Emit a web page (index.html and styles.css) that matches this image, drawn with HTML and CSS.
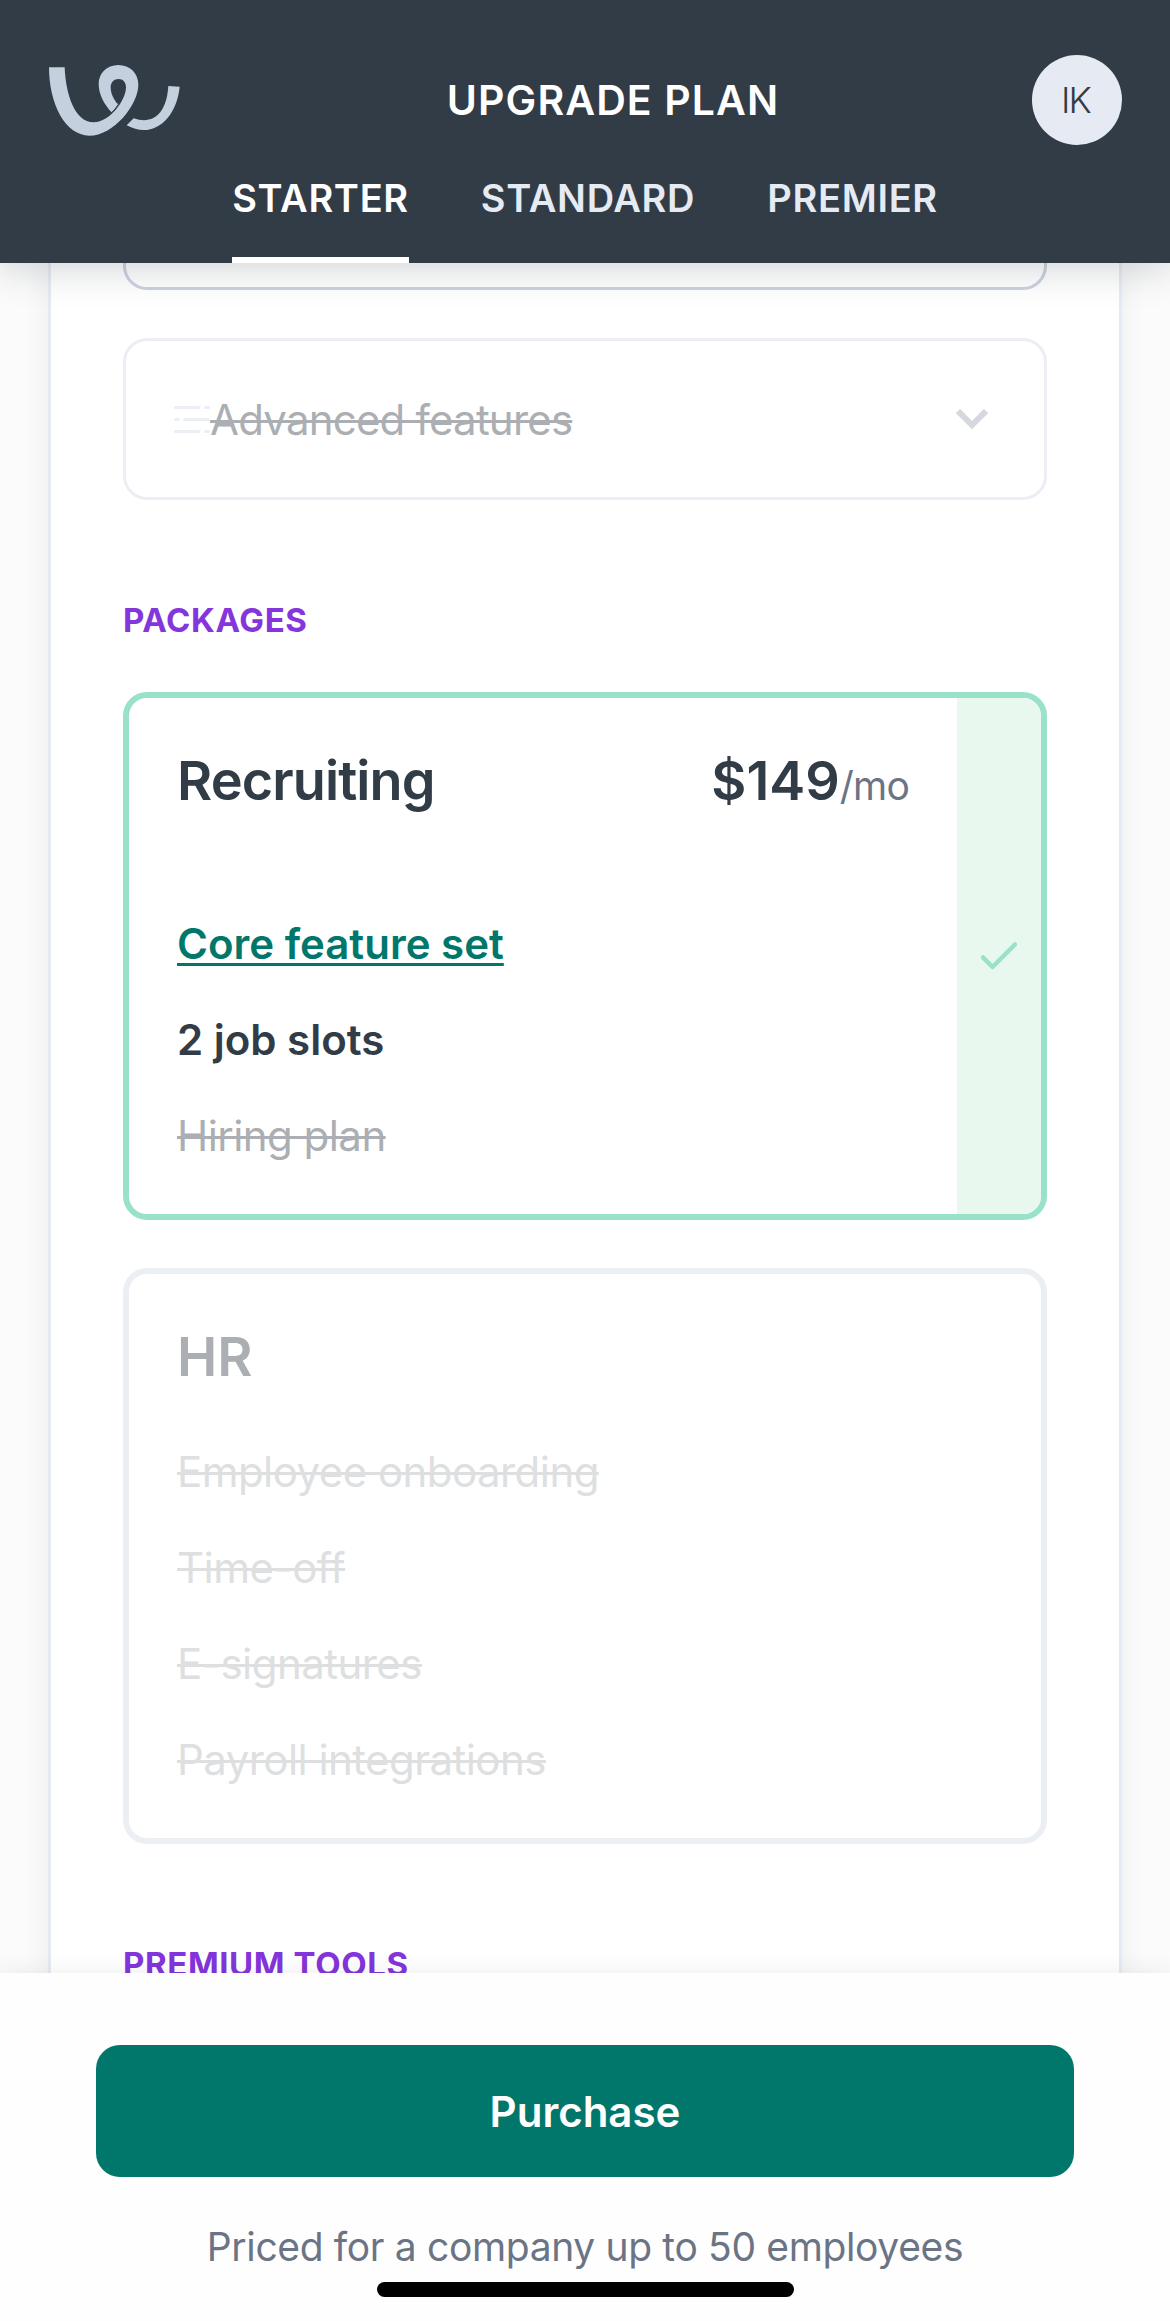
FILE: index.html
```html
<!DOCTYPE html>
<html lang="en">
<head>
    <meta charset="UTF-8">
    <meta name="viewport" content="width=device-width, initial-scale=1.0">
    <title>Upgrade Plan</title>
    <link rel="stylesheet" href="styles.css">
</head>
<body>
    <header class="header">
        <div class="header-bar">
            <svg class="logo" viewBox="54 45 438 213">
                <path class="logo-fill" d="M57 52 L104 52 C107 130 133 217 191 217 C240 217 288 150 288 112 C288 97 279 87 266 87 C252 87 242 97 242 112 C242 130 250 145 262 162 L245 187 C224 165 206 135 206 102 C206 70 230 45 265 45 C300 45 325 70 325 104 C325 165 250 257 178 257 C105 257 57 160 57 52 Z"/>
                <path class="logo-fill" d="M290 226 L311 205 C370 225 410 190 415 108 L449 110 C440 205 370 270 290 226 Z"/>
                <path class="logo-fill" d="M236 176 L262 160 L266 164 L246 187 Z"/>
                <path class="logo-seam" d="M244 189 Q256 178 266 162"/>
            </svg>
            <h1 class="title">UPGRADE PLAN</h1>
            <div class="avatar">IK</div>
        </div>
        <nav class="tabs">
            <a class="tab active">STARTER</a>
            <a class="tab">STANDARD</a>
            <a class="tab">PREMIER</a>
        </nav>
    </header>

    <main class="content">
        <div class="panel">
            <div class="accordion accordion-end"></div>
            <div class="accordion disabled">
                <svg class="list-icon" viewBox="0 0 36 27">
                    <path d="M1.5 1.5H25M31.5 1.5h3M1.5 13.5h3M10.5 13.5H34.5M1.5 25.5H25M31.5 25.5h3"/>
                </svg>
                <span class="accordion-label">Advanced features</span>
                <svg class="chevron" viewBox="0 0 32 20">
                    <path d="M2 2 L16 16 L30 2"/>
                </svg>
            </div>

            <h2 class="section-title">PACKAGES</h2>

            <div class="package selected">
                <div class="package-body">
                    <div class="package-head">
                        <h3 class="package-name">Recruiting</h3>
                        <div class="cost"><span class="price">$149</span><span class="per">/mo</span></div>
                    </div>
                    <ul class="features">
                        <li><a class="link">Core feature set</a></li>
                        <li class="included">2 job slots</li>
                        <li><s>Hiring plan</s></li>
                    </ul>
                </div>
                <div class="package-check">
                    <svg class="check" viewBox="0 0 36 28">
                        <path d="M2 15.5 L11.5 25 L34 2.5"/>
                    </svg>
                </div>
            </div>

            <div class="package disabled">
                <div class="package-body">
                    <div class="package-head">
                        <h3 class="package-name">HR</h3>
                    </div>
                    <ul class="features">
                        <li><s>Employee onboarding</s></li>
                        <li><s>Time-off</s></li>
                        <li><s>E-signatures</s></li>
                        <li><s>Payroll integrations</s></li>
                    </ul>
                </div>
            </div>

            <h2 class="section-title">PREMIUM TOOLS</h2>
        </div>
    </main>

    <footer class="footer">
        <button class="purchase">Purchase</button>
        <p class="note">Priced for a company up to 50 employees</p>
        <div class="home-indicator"></div>
    </footer>
</body>
</html>
```
FILE: styles.css
```css
* { box-sizing: border-box; }
body {
    display: flex;
    flex-direction: column;
    height: 2321px;
    margin: 0;
    overflow: hidden;
    background: #fbfbfb;
    color: #323c47;
    font-family: Inter, "Liberation Sans", sans-serif;
    font-size: 42px;
}
h1, h2, h3, p, ul { margin: 0; padding: 0; }

/* Header */
.header {
    position: relative;
    z-index: 1;
    flex: none;
    height: 263px;
    padding-top: 55px;
    background: #323c47;
    box-shadow: 0 6px 36px rgba(50, 60, 71, 0.22);
}
.header-bar {
    display: flex;
    align-items: center;
    justify-content: space-between;
    height: 90px;
    padding: 0 48px;
}
.logo { width: 146px; height: 71px; }
.logo-fill { fill: #c5d0df; }
.logo-seam { fill: none; stroke: #323c47; stroke-width: 3; }
.title {
    color: #fff;
    font-size: 41px;
    font-weight: 600;
    letter-spacing: 1.1px;
}
.avatar {
    width: 90px;
    height: 90px;
    border-radius: 50%;
    background: #e6ebf3;
    font-size: 36px;
    font-weight: 300;
    line-height: 90px;
    letter-spacing: -2px;
    text-align: center;
    text-indent: -3px;
}
.tabs {
    display: flex;
    justify-content: center;
    gap: 72px;
}
.tab {
    padding: 23px 0 29px;
    border-bottom: 6px solid transparent;
    color: #e6ebf3;
    font-size: 38px;
    font-weight: 600;
    line-height: 60px;
    letter-spacing: 0.7px;
}
.tab.active { border-color: #fff; color: #fff; }

/* Plan details */
.content {
    flex: 1;
    min-height: 0;
    padding: 0 48px;
    overflow: hidden;
}
.panel {
    height: 1800px;
    padding: 0 72px;
    border: solid #e6ebf3;
    border-width: 0 3px;
    background: #fff;
    box-shadow: 0 0 24px rgba(50, 60, 71, 0.08);
}
.accordion {
    display: flex;
    align-items: center;
    height: 162px;
    padding: 0 56px 0 48px;
    border: 3px solid #cbd3e0;
    border-radius: 24px;
}
.accordion-end {
    height: 27px;
    margin-bottom: 48px;
    border-top: 0;
    border-radius: 0 0 24px 24px;
}
.accordion.disabled { border-color: #ebeff5; }
.list-icon { width: 36px; height: 27px; }
.list-icon path { fill: none; stroke: #ebeff5; stroke-width: 3; stroke-linecap: round; }
.accordion-label {
    flex: 1;
    color: #abafb4;
    letter-spacing: -0.8px;
    text-decoration: line-through 3px;
}
.chevron { width: 32px; height: 20px; }
.chevron path { fill: none; stroke: #d5d8df; stroke-width: 6; }
.section-title {
    margin: 96px 0 48px;
    color: #8435db;
    font-size: 33px;
    font-weight: 700;
    line-height: 48px;
    letter-spacing: 0.6px;
}

/* Packages */
.package {
    display: flex;
    border: 6px solid #9ae1ca;
    border-radius: 24px;
    overflow: hidden;
}
.package + .package { margin-top: 48px; }
.package.disabled { border-color: #ebeff4; }
.package-body { flex: 1; padding: 42px 48px 48px; }
.package-head {
    display: flex;
    justify-content: space-between;
    height: 81px;
    margin-bottom: 93px;
    line-height: 81px;
}
.package-name, .price { font-size: 54px; font-weight: 600; }
.package-name { letter-spacing: -0.9px; }
.cost { display: flex; align-items: baseline; }
.per { color: #6b7484; font-size: 39px; letter-spacing: -0.8px; }
.features {
    display: grid;
    gap: 36px;
    line-height: 60px;
    list-style: none;
}
.features s {
    color: #abafb4;
    letter-spacing: -0.55px;
    text-decoration-thickness: 3px;
}
.link {
    color: #00776a;
    font-weight: 600;
    text-decoration: underline 3px;
    text-underline-offset: 4px;
}
.included { font-weight: 600; }
.disabled .package-name { color: #abafb4; letter-spacing: 0; }
.disabled .package-head { margin-bottom: 45px; }
.disabled .features s { color: #dedfe1; }
.package-check {
    display: flex;
    align-items: center;
    justify-content: center;
    width: 84px;
    background: #e8f8ef;
}
.check { width: 36px; height: 28px; }
.check path {
    fill: none;
    stroke: #9ae1ca;
    stroke-width: 4.5;
    stroke-linecap: round;
    stroke-linejoin: round;
}

/* Footer */
.footer {
    position: relative;
    z-index: 1;
    display: flex;
    flex-direction: column;
    align-items: center;
    flex: none;
    height: 348px;
    padding: 72px 96px 0;
    background: #fefefe;
    box-shadow: 0 0 24px rgba(0, 0, 0, 0.08);
}
.purchase {
    width: 100%;
    height: 132px;
    border: 0;
    border-radius: 24px;
    background: #00776a;
    color: #fff;
    font: inherit;
    font-weight: 600;
}
.note {
    margin-top: 40px;
    color: #6b7484;
    font-size: 39px;
    line-height: 60px;
    letter-spacing: -0.35px;
}
.home-indicator {
    width: 417px;
    height: 15px;
    margin-top: 5px;
    border-radius: 8px;
    background: #000;
}
```
